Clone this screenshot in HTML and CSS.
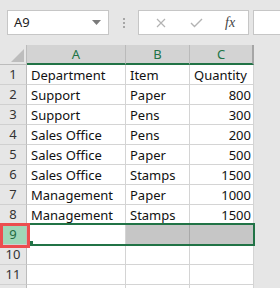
FILE: index.html
```html
<!DOCTYPE html>
<html>
<head>
<meta charset="utf-8">
<link rel="stylesheet" href="styles.css">
</head>
<body>
<div class="app">
  <div class="toolbar">
    <div class="namebox">
      <span class="nb-text">A9</span>
      <svg class="nb-arrow" width="9" height="5" viewBox="0 0 9 5"><path d="M0 0H9L4.5 5Z" fill="#7a7a7a"/></svg>
    </div>
    <div class="dots"><i></i><i></i><i></i></div>
    <div class="fbar">
      <svg class="ico-x" width="10" height="10" viewBox="0 0 10 10"><path d="M1 1L9 9M9 1L1 9" stroke="#b3b3b3" stroke-width="1.2" fill="none"/></svg>
      <svg class="ico-ok" width="13" height="10" viewBox="0 0 13 10"><path d="M1 5L4.5 8.5L12 1" stroke="#b3b3b3" stroke-width="1.4" fill="none"/></svg>
      <span class="fx">fx</span>
    </div>
    <div class="finput"></div>
  </div>
  <div class="sheet">
    <div class="corner"><span class="tri"></span></div>
    <div class="ch">A</div><div class="ch">B</div><div class="ch chl">C</div><div class="off offh"></div>

    <div class="rh">1</div><div class="c">Department</div><div class="c">Item</div><div class="c">Quantity</div><div class="off"></div>
    <div class="rh">2</div><div class="c">Support</div><div class="c">Paper</div><div class="c n">800</div><div class="off"></div>
    <div class="rh">3</div><div class="c">Support</div><div class="c">Pens</div><div class="c n">300</div><div class="off"></div>
    <div class="rh">4</div><div class="c">Sales Office</div><div class="c">Pens</div><div class="c n">200</div><div class="off"></div>
    <div class="rh">5</div><div class="c">Sales Office</div><div class="c">Paper</div><div class="c n">500</div><div class="off"></div>
    <div class="rh">6</div><div class="c">Sales Office</div><div class="c">Stamps</div><div class="c n">1500</div><div class="off"></div>
    <div class="rh">7</div><div class="c">Management</div><div class="c">Paper</div><div class="c n">1000</div><div class="off"></div>
    <div class="rh">8</div><div class="c">Management</div><div class="c">Stamps</div><div class="c n">1500</div><div class="off"></div>
    <div class="rh rhs">9</div><div class="c"></div><div class="c sel"></div><div class="c sel"></div><div class="off"></div>
    <div class="rh">10</div><div class="c"></div><div class="c"></div><div class="c"></div><div class="off"></div>
    <div class="rh">11</div><div class="c"></div><div class="c"></div><div class="c"></div><div class="off"></div>
    <div class="rh"></div><div class="c"></div><div class="c"></div><div class="c"></div><div class="off"></div>

    <div class="selbox"></div>
    <div class="handle"></div>
    <div class="mark"></div>
  </div>
</div>
</body>
</html>
```

FILE: styles.css
```css
html, body {
  margin: 0;
  padding: 0;
  background: #e6e6e6;
}
.app {
  width: 280px;
  height: 288px;
  overflow: hidden;
  font-family: "Noto Sans", "Liberation Sans", sans-serif;
  color: #1a1a1a;
}
.toolbar {
  height: 45px;
  box-sizing: border-box;
  padding-top: 10px;
  display: flex;
  align-items: flex-start;
}
.namebox {
  margin-left: 7px;
  width: 102px;
  height: 25px;
  box-sizing: border-box;
  background: #fff;
  border: 1px solid #c6c6c6;
  display: flex;
  align-items: center;
  justify-content: space-between;
  padding: 0 7px 0 6px;
}
.nb-text {
  font-size: 13px;
  color: #222;
  line-height: 1;
}
.dots {
  width: 29px;
  height: 25px;
  display: flex;
  flex-direction: column;
  align-items: center;
  justify-content: center;
  gap: 2px;
}
.dots i {
  display: block;
  width: 2px;
  height: 2px;
  background: #a6a6a6;
}
.fbar {
  width: 111px;
  height: 25px;
  box-sizing: border-box;
  background: #fff;
  border: 1px solid #c6c6c6;
  display: flex;
  align-items: center;
  padding-left: 17px;
}
.ico-x { margin-right: 24px; }
.ico-ok { margin-right: 22px; }
.fx {
  font-family: "Liberation Serif", serif;
  font-style: italic;
  font-size: 14px;
  color: #444;
  line-height: 1;
}
.finput {
  margin-left: 4px;
  flex: 1;
  height: 25px;
  box-sizing: border-box;
  background: #fff;
  border: 1px solid #c6c6c6;
  border-right: none;
}
.sheet {
  position: relative;
  display: grid;
  grid-template-columns: 27px 99px 64px 64px 26px;
  grid-auto-rows: 20px;
}
.sheet > div {
  box-sizing: border-box;
}
.corner {
  background: #e6e6e6;
  border-right: 1px solid #bcbcbc;
  border-bottom: 1px solid #bcbcbc;
  position: relative;
}
.tri {
  position: absolute;
  right: 2px;
  bottom: 2px;
  width: 0;
  height: 0;
  border-left: 13px solid transparent;
  border-bottom: 13px solid #bdbdbd;
}
.ch {
  background: #d3d3d3;
  border-right: 1px solid #bababa;
  border-bottom: 2px solid #217346;
  color: #217346;
  font-size: 13px;
  line-height: 18px;
  text-align: center;
}
.chl {
  border-right: 2px solid #a6a6a6;
}
.off {
  background: #e6e6e6;
}
.rh {
  background: #e6e6e6;
  border-right: 1px solid #bcbcbc;
  border-bottom: 1px solid #d0d0d0;
  font-size: 13px;
  line-height: 19px;
  text-align: center;
  color: #333;
}
.rhs {
  background: #a0d6b8;
  color: #1f6b42;
}
.c {
  background: #fff;
  border-right: 1px solid #d4d4d4;
  border-bottom: 1px solid #d4d4d4;
  font-size: 13px;
  line-height: 19px;
  padding: 1px 3px 0 4px;
  white-space: nowrap;
  overflow: hidden;
  color: #111;
}
.n {
  text-align: right;
  padding-right: 2px;
}
.sel {
  background: #c6c6c6;
  border-right-color: #a9a9a9;
}
.selbox {
  position: absolute;
  left: 27px;
  top: 178px;
  width: 228px;
  height: 23px;
  box-sizing: border-box;
  border: 2px solid #217346;
}
.handle {
  position: absolute;
  left: 29px;
  top: 196px;
  width: 4px;
  height: 5px;
  background: #217346;
}
.mark {
  position: absolute;
  left: 0;
  top: 178px;
  width: 30px;
  height: 25px;
  box-sizing: border-box;
  border: 3px solid #ec4d4f;
}
```
